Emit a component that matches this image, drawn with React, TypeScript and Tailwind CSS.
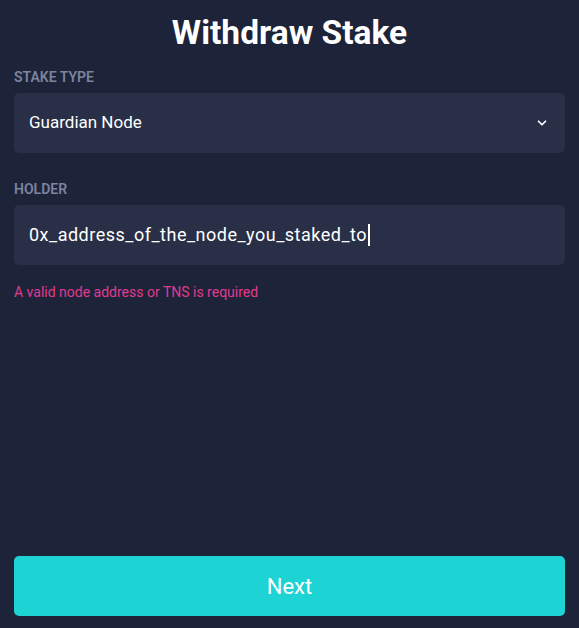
import React from "react";

const font = { fontFamily: "Roboto, 'Noto Sans', sans-serif" };

export default function App() {
  return (
    <div style={font} className="w-[579px] h-[628px] bg-[#1d2338] flex flex-col px-[14px] overflow-hidden">
      <h1 className="text-center text-white font-bold text-[33.5px] leading-none mt-[16px]">Withdraw Stake</h1>

      <label className="mt-[20px] text-[14px] font-semibold text-[#7d84a0] leading-none">STAKE TYPE</label>
      <div className="mt-[9px] h-[60px] rounded-[5px] bg-[#282f47] flex items-center justify-between pl-[15px] pr-[16px]">
        <span className="text-white text-[17px]">Guardian Node</span>
        <svg width="14" height="14" viewBox="0 0 24 24" fill="none" stroke="white" strokeWidth="3" strokeLinecap="round" strokeLinejoin="round">
          <path d="M6 9l6 6 6-6" />
        </svg>
      </div>

      <label className="mt-[29px] text-[14px] font-semibold text-[#7d84a0] leading-none">HOLDER</label>
      <div className="mt-[9px] h-[60px] rounded-[5px] bg-[#282f47] flex items-center pl-[15px]">
        <span className="text-white text-[18px] tracking-[0.5px]">0x_address_of_the_node_you_staked_to</span>
        <span className="w-[2px] h-[22px] bg-white ml-[1px]" />
      </div>

      <p className="mt-[20px] text-[14px] text-[#e23a8f] leading-none">A valid node address or TNS is required</p>

      <div className="flex-1" />
      <button className="mb-[12px] h-[60px] rounded-[5px] bg-[#1dd3d3] text-white text-[22px]">Next</button>
    </div>
  );
}
